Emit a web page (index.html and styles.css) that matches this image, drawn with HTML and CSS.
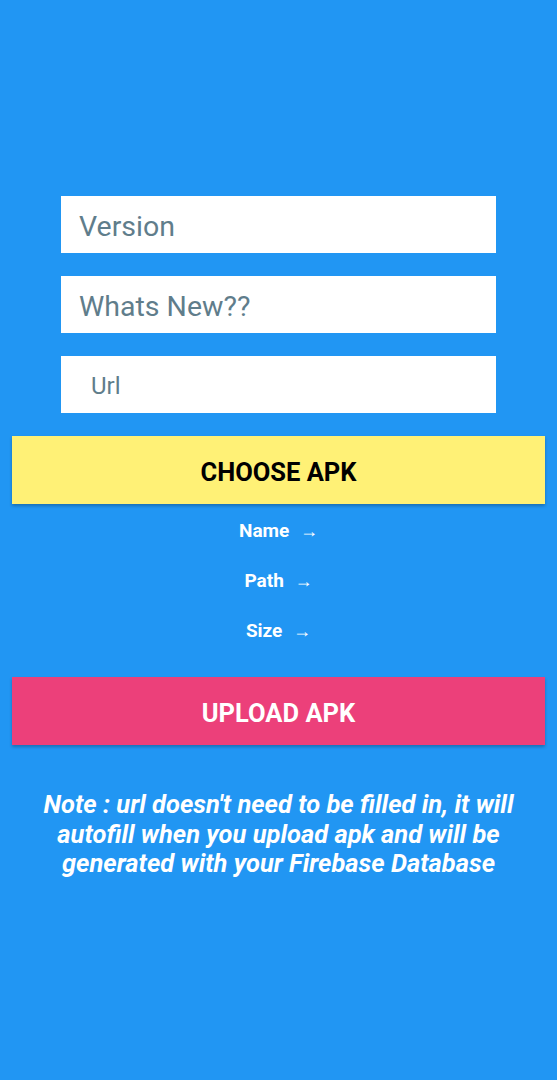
FILE: index.html
```html
<!DOCTYPE html>
<html>
<head>
<meta charset="utf-8">
<link rel="stylesheet" href="styles.css">
</head>
<body>
<div class="screen">
  <div class="fields">
    <div class="field"><span class="ph">Version</span></div>
    <div class="field"><span class="ph">Whats New??</span></div>
    <div class="field field-url"><span class="ph">Url</span></div>
  </div>
  <div class="btn btn-choose">CHOOSE APK</div>
  <div class="info">
    <div class="info-row">Name <span class="arrow">→</span></div>
    <div class="info-row">Path <span class="arrow">→</span></div>
    <div class="info-row">Size <span class="arrow">→</span></div>
  </div>
  <div class="btn btn-upload">UPLOAD APK</div>
  <p class="note">Note : url doesn't need to be filled in, it will autofill when you upload apk and will be generated with your Firebase Database</p>
</div>
</body>
</html>
```
FILE: styles.css
```css
html, body {
  margin: 0;
  padding: 0;
  background: #2196F3;
}
body {
  font-family: Roboto, "Noto Sans", sans-serif;
  width: 557px;
  height: 1080px;
  overflow: hidden;
}
.screen {
  display: flex;
  flex-direction: column;
  padding-top: 196px;
}
.fields {
  display: flex;
  flex-direction: column;
  gap: 23px;
  margin: 0 61px;
}
.field {
  height: 57px;
  box-sizing: border-box;
  background: #fff;
  display: flex;
  align-items: center;
  padding: 4px 0 0 18px;
}
.ph {
  color: #607D8B;
  font-size: 28.5px;
}
.field-url {
  padding-left: 30px;
  padding-top: 3px;
}
.field-url .ph {
  font-size: 24px;
}
.btn {
  margin: 23px 12px 0;
  height: 68px;
  box-sizing: border-box;
  padding-top: 3px;
  display: flex;
  align-items: center;
  justify-content: center;
  font-weight: bold;
  font-size: 25.5px;
  box-shadow: 0 2px 3px rgba(0,0,0,0.25);
}
.btn-choose {
  background: #FFF176;
  color: #000;
}
.btn-upload {
  background: #EC407A;
  color: #fff;
  margin-top: 21px;
}
.info {
  display: flex;
  flex-direction: column;
  margin-top: 2px;
}
.info-row {
  height: 50px;
  line-height: 50px;
  text-align: center;
  color: #fff;
  font-weight: bold;
  font-size: 19px;
}
.arrow {
  font-size: 18px;
  margin-left: 6px;
}
.note {
  margin: 45px 28px 0;
  text-align: center;
  color: #fff;
  font-weight: bold;
  font-style: italic;
  font-size: 25.5px;
  line-height: 29.5px;
}
```
